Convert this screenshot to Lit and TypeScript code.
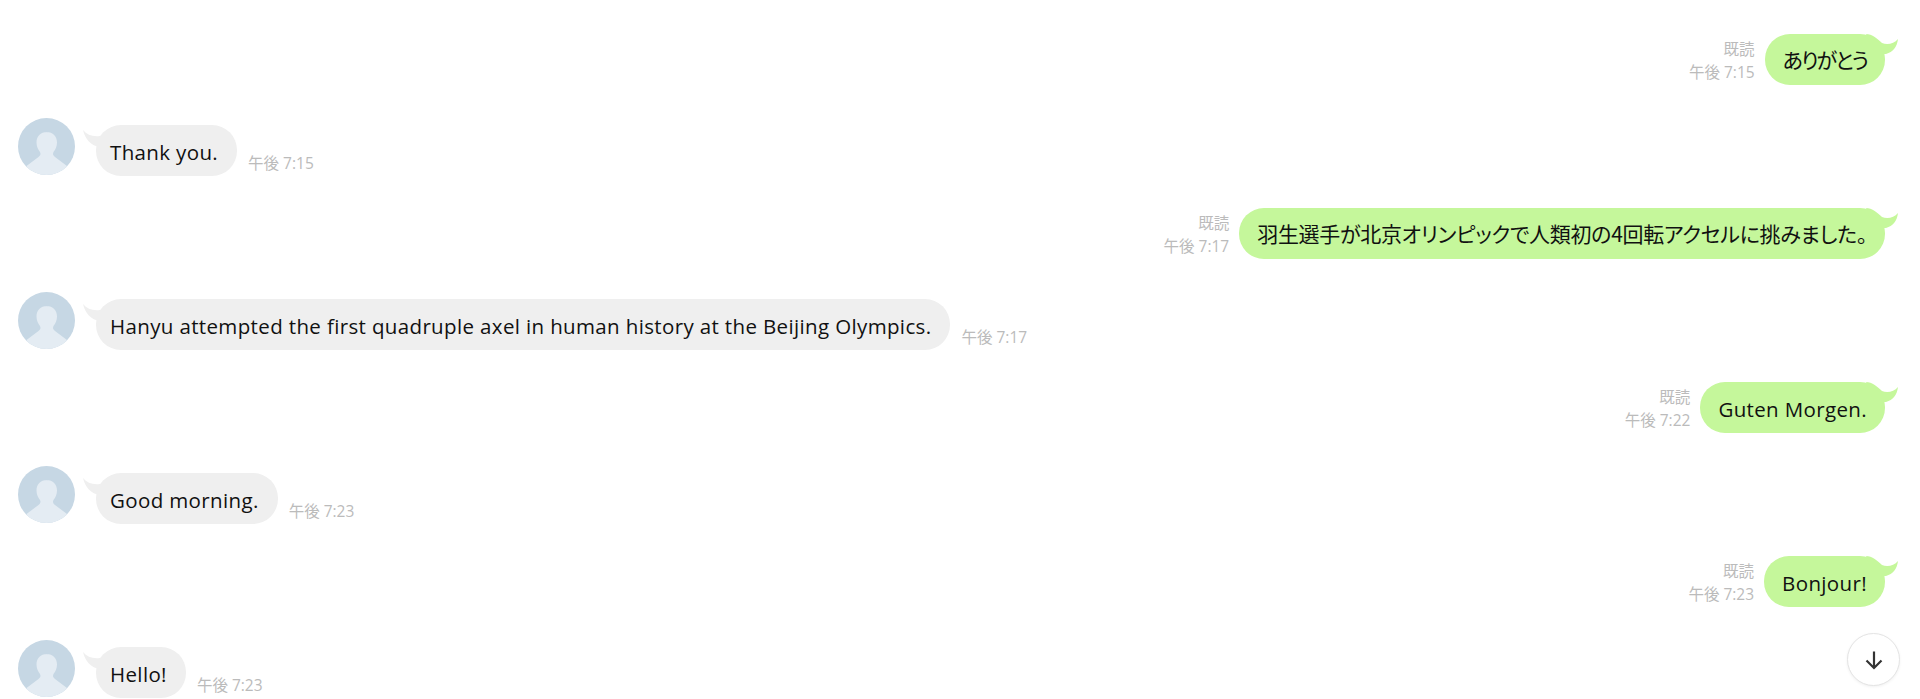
import { LitElement, html, css } from "lit";
import { customElement } from "lit/decorators.js";

const msgs: { me: boolean; text: string; time: string; cjk?: string }[] = [
  { me: true, text: "ありがとう", time: "午後 7:15", cjk: "cjk short" },
  { me: false, text: "Thank you.", time: "午後 7:15" },
  { me: true, text: "羽生選手が北京オリンピックで人類初の4回転アクセルに挑みました。", time: "午後 7:17", cjk: "cjk" },
  { me: false, text: "Hanyu attempted the first quadruple axel in human history at the Beijing Olympics.", time: "午後 7:17" },
  { me: true, text: "Guten Morgen.", time: "午後 7:22" },
  { me: false, text: "Good morning.", time: "午後 7:23" },
  { me: true, text: "Bonjour!", time: "午後 7:23" },
  { me: false, text: "Hello!", time: "午後 7:23" },
];

@customElement("app-root")
export class AppRoot extends LitElement {
  static styles = css`
    :host {
      display: block;
      height: 699px;
      overflow: hidden;
      background: #fff;
      font-family: "Open Sans", "Noto Sans CJK JP", sans-serif;
      color: #111;
      position: relative;
    }
    .list { display: flex; flex-direction: column; padding-top: 34px; }
    .row { display: flex; }
    .row.me { justify-content: flex-end; padding-right: 35px; height: 84px; }
    .row.you { justify-content: flex-start; padding-left: 18px; height: 90px; }
    .bubble {
      position: relative;
      height: 51px;
      box-sizing: border-box;
      border-radius: 25px;
      font-size: 20.5px;
      letter-spacing: 0.36px;
      padding-top: 3px;
      line-height: 48px;
      white-space: nowrap;
    }
    .me .bubble { background: #c5f79b; padding-left: 18px; padding-right: 18px; }
    .you .bubble { background: #efefef; padding-left: 14px; padding-right: 19px; margin: 7px 0 0 21px; }
    .me .bubble.cjk {
      letter-spacing: -0.3px;
      font-size: 21px;
      font-family: "Noto Sans CJK JP", sans-serif;
      font-feature-settings: "palt";
      font-weight: 400;
      padding-top: 1px;
    }
    .me .bubble.cjk.short { letter-spacing: -2px; }
    .tail { position: absolute; width: 20px; height: 18px; overflow: visible; }
    .me .tail { right: -13px; top: 4px; }
    .you .tail { left: -13px; top: 4px; }
    .avatar { width: 57px; height: 57px; flex: none; }
    .meta {
      font-family: "Open Sans", "Noto Sans CJK JP", sans-serif;
      font-size: 15.5px;
      line-height: 23px;
      color: #bbb;
      text-align: right;
      white-space: nowrap;
      letter-spacing: 0;
    }
    .me .meta { margin-right: 10px; padding-top: 4px; }
    .you .meta { margin: 34px 0 0 11px; }
    .down {
      position: absolute;
      right: 20px;
      top: 633px;
      width: 53px;
      height: 53px;
      box-sizing: border-box;
      border: 1px solid #e4e4e4;
      border-radius: 50%;
      background: #fff;
      box-shadow: 0 1px 3px rgba(0,0,0,.06);
      display: flex;
      align-items: center;
      justify-content: center;
    }
  `;

  private avatar() {
    return html`<svg class="avatar" viewBox="0 0 57 57">
      <defs><clipPath id="c"><circle cx="28.5" cy="28.5" r="28.5"></circle></clipPath></defs>
      <g clip-path="url(#c)">
        <rect width="57" height="57" fill="#c6d7e4"></rect>
        <path d="M28.500 14c6.500 0 10.500 4.500 10.500 10.500 0 4-1.500 7-3.500 9.500-1 2-.5 3.500 1.500 5l12 9v9H8.500v-9l12-9c2-1.500 2.500-3 1.500-5-2-2.500-3.500-5.500-3.500-9.500 0-6 4-10.500 10.500-10.500z" fill="#e4ecf3"></path>
      </g>
    </svg>`;
  }

  render() {
    return html`<div class="list">
        ${msgs.map((m) =>
          m.me
            ? html`<div class="row me">
                <div class="meta"><div>既読</div><div>${m.time}</div></div>
                <div class="bubble ${m.cjk ?? ""}">
                  ${m.text}
                  <svg class="tail" viewBox="0 0 20 18"><path d="M-12-4C-6-4 0 1 4 5 9 7 16 6 20 1 19 9 15 14 8 16L-4 16z" fill="#c5f79b"></path></svg>
                </div>
              </div>`
            : html`<div class="row you">
                ${this.avatar()}
                <div class="bubble">
                  ${m.text}
                  <svg class="tail" viewBox="0 0 20 18"><path d="M0 1C4 6 10 8 17 7L22 6 22 18 17 18C8 17 2 10 0 1z" fill="#efefef"></path></svg>
                </div>
                <div class="meta">${m.time}</div>
              </div>`
        )}
      </div>
      <div class="down">
        <svg width="24" height="24" viewBox="0 0 24 24" fill="none" stroke="#333" stroke-width="2.200"><path d="M12 3.500v16.500M4.500 12.500 12 20l7.500-7.500"></path></svg>
      </div>`;
  }
}
